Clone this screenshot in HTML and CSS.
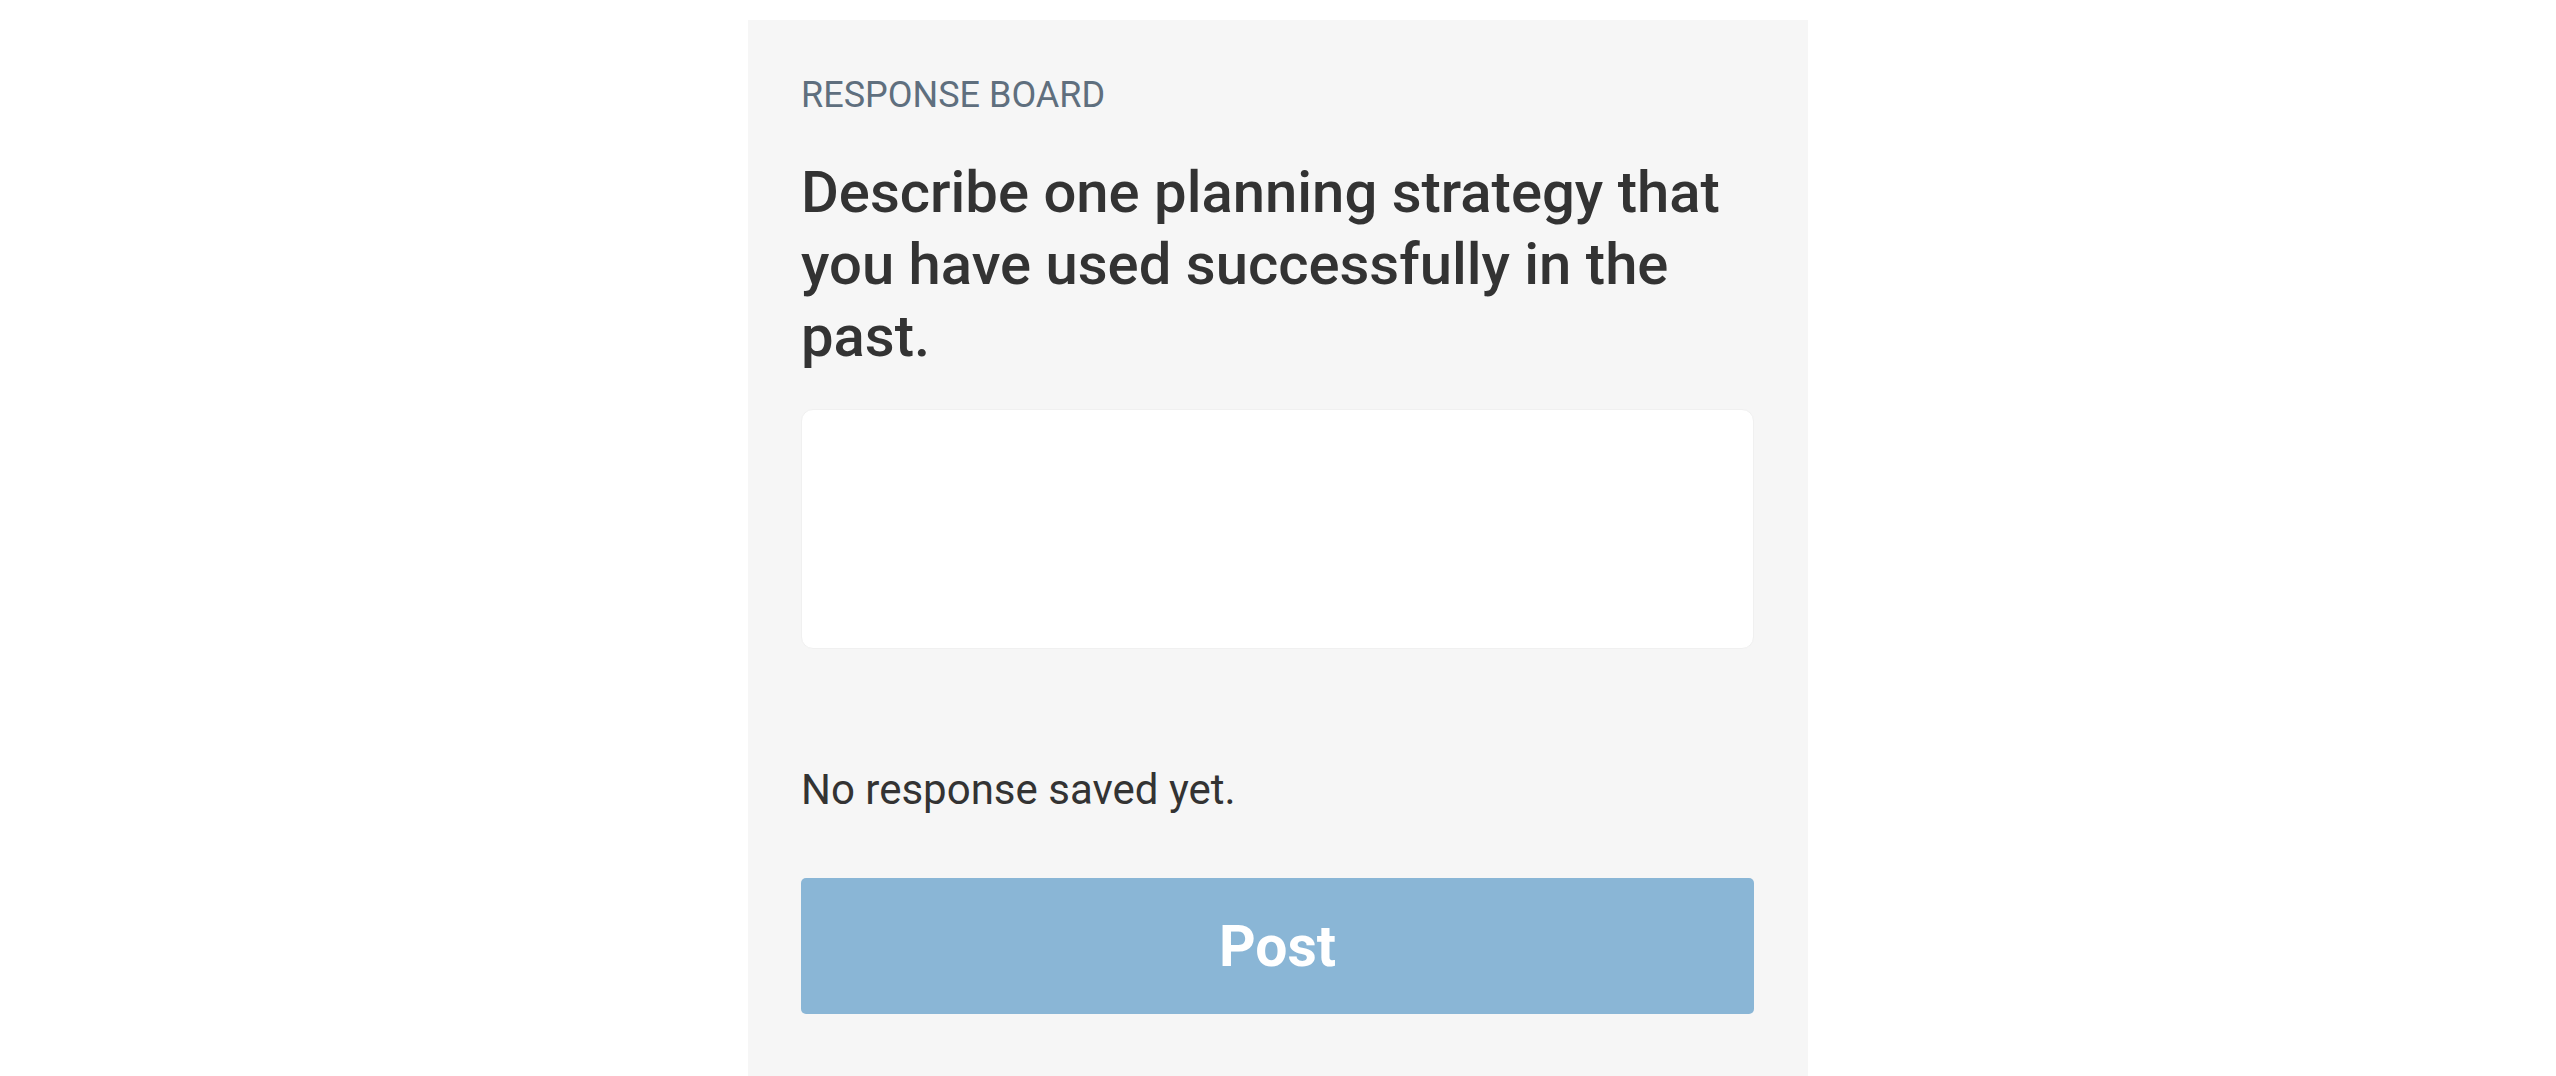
FILE: index.html
```html
<!DOCTYPE html>
<html lang="en">
<head>
<meta charset="utf-8">
<title>Response Board</title>
<link rel="stylesheet" href="styles.css">
</head>
<body>
<main class="board">
  <div class="board-label">RESPONSE BOARD</div>
  <h1 class="board-question">Describe one planning strategy that you have used successfully in the past.</h1>
  <textarea class="board-input" aria-label="Your response"></textarea>
  <p class="board-status">No response saved yet.</p>
  <button class="board-post" type="button">Post</button>
</main>
</body>
</html>
```

FILE: styles.css
```css
html, body {
  margin: 0;
  padding: 0;
  background: #ffffff;
}

body {
  font-family: Roboto, "Noto Sans", "Liberation Sans", sans-serif;
  color: #333333;
}

.board {
  box-sizing: border-box;
  width: 1060px;
  margin: 20px auto 0;
  padding: 54px 54px 90px 53px;
  background: #f6f6f6;
  display: flex;
  flex-direction: column;
}

.board-label {
  font-size: 36px;
  line-height: normal;
  color: #5f6f7e;
  margin: 0 0 40px;
}

.board-question {
  font-size: 58px;
  line-height: 72px;
  font-weight: 500;
  color: #333333;
  margin: 0 0 37px;
}

.board-input {
  box-sizing: border-box;
  display: block;
  width: 100%;
  height: 240px;
  margin: 0 0 116px;
  padding: 20px;
  border: 1px solid #f0f0f0;
  border-radius: 12px;
  background: #ffffff;
  resize: none;
  font-family: inherit;
  font-size: 40px;
  color: #333333;
  outline: none;
}

.board-status {
  font-size: 42px;
  line-height: normal;
  color: #333333;
  margin: 0 0 64px;
}

.board-post {
  box-sizing: border-box;
  display: block;
  width: 100%;
  height: 136px;
  border: none;
  border-radius: 5px;
  background: #8ab6d6;
  color: #ffffff;
  font-family: Roboto, "Liberation Sans", sans-serif;
  font-weight: 700;
  font-size: 57px;
  padding: 0;
  cursor: pointer;
}
```
